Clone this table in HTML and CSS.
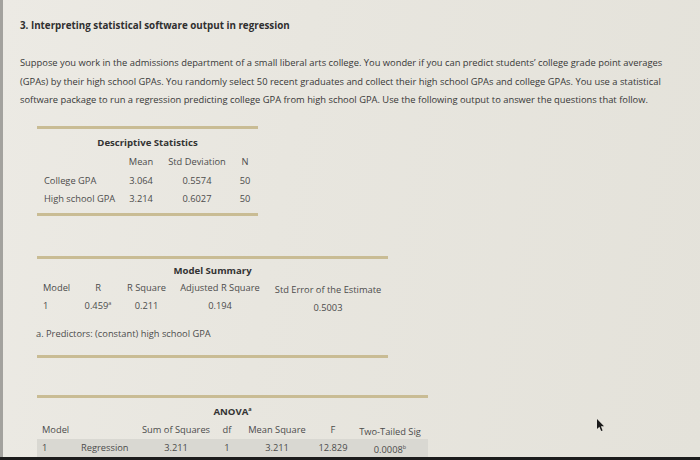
FILE: index.html
```html
<!DOCTYPE html>
<html>
<head>
<meta charset="utf-8">
<link rel="stylesheet" href="styles.css">
</head>
<body>
<div class="screen">
  <h1 class="title">3. Interpreting statistical software output in regression</h1>
  <p class="intro">Suppose you work in the admissions department of a small liberal arts college. You wonder if you can predict students’ college grade point averages (GPAs) by their high school GPAs. You randomly select 50 recent graduates and collect their high school GPAs and college GPAs. You use a statistical software package to run a regression predicting college GPA from high school GPA. Use the following output to answer the questions that follow.</p>

  <section class="output desc">
    <div class="rule"></div>
    <div class="caption">Descriptive Statistics</div>
    <table>
      <colgroup><col class="d1"><col class="d2"><col class="d3"><col class="d4"></colgroup>
      <tr><td></td><td>Mean</td><td>Std Deviation</td><td>N</td></tr>
      <tr><td class="lbl">College GPA</td><td>3.064</td><td>0.5574</td><td>50</td></tr>
      <tr><td class="lbl">High school GPA</td><td>3.214</td><td>0.6027</td><td>50</td></tr>
    </table>
    <div class="rule end"></div>
  </section>

  <section class="output summary">
    <div class="rule"></div>
    <div class="caption">Model Summary</div>
    <table>
      <colgroup><col class="m1"><col class="m2"><col class="m3"><col class="m4"><col class="m5"></colgroup>
      <tr><td class="lbl">Model</td><td>R</td><td>R Square</td><td>Adjusted R Square</td><td class="low">Std Error of the Estimate</td></tr>
      <tr><td class="lbl one">1</td><td>0.459<sup>a</sup></td><td>0.211</td><td>0.194</td><td class="low">0.5003</td></tr>
    </table>
    <p class="note">a. Predictors: (constant) high school GPA</p>
    <div class="rule"></div>
  </section>

  <section class="output anova">
    <div class="rule"></div>
    <div class="caption">ANOVA<sup>a</sup></div>
    <table>
      <colgroup><col class="a1"><col class="a2"><col class="a3"><col class="a4"><col class="a5"><col class="a6"><col class="a7"></colgroup>
      <tr><td class="lbl">Model</td><td></td><td>Sum of Squares</td><td>df</td><td>Mean Square</td><td>F</td><td class="low">Two-Tailed Sig</td></tr>
      <tr class="shade"><td class="lbl one">1</td><td class="lbl reg">Regression</td><td>3.211</td><td>1</td><td>3.211</td><td>12.829</td><td class="low">0.0008<sup>b</sup></td></tr>
    </table>
  </section>
</div>
<div class="bezel"></div>
<svg class="cursor" width="9" height="13" viewBox="0 0 9 13"><path d="M1 0 L1 10 L3.4 7.8 L5.2 12 L6.6 11.4 L4.9 7.3 L8 7.2 Z" fill="#1a1a1a"/></svg>
</body>
</html>
```
FILE: styles.css
```css
html, body {
  margin: 0;
  padding: 0;
}
body {
  width: 700px;
  height: 460px;
  overflow: hidden;
  position: relative;
  background: #e7e5de;
  font-family: "Open Sans", "Noto Sans", sans-serif;
  color: #3a3a3a;
}
.screen {
  height: 457px;
  box-sizing: border-box;
  border-left: 3px solid #a3a29e;
  padding: 19px 0 0 17px;
  overflow: hidden;
  background: linear-gradient(100deg, #eceae4 0%, #e8e6df 40%, #e4e2da 100%);
}
.title {
  margin: 0;
  font-size: 9.8px;
  line-height: 14px;
  font-weight: 700;
  color: #2f2f2f;
}
.intro {
  margin: 21px 0 0;
  width: 652px;
  font-size: 9.35px;
  line-height: 18.5px;
  color: #383838;
}
.output {
  margin-left: 17px;
  color: #4c4c4c;
  font-size: 9.3px;
}
.rule {
  height: 3px;
  background: #c9bc94;
}
.caption {
  text-align: center;
  font-weight: 700;
  font-size: 9.6px;
  color: #333;
  line-height: 18px;
}
table {
  border-collapse: collapse;
  table-layout: fixed;
}
td {
  padding: 0;
  height: 18px;
  line-height: 18px;
  text-align: center;
  white-space: nowrap;
}
td.lbl { text-align: left; padding-left: 7px; }
td.one { padding-left: 7px; }
td.low { vertical-align: bottom; line-height: 14px; }
sup { font-size: 5.5px; vertical-align: 4px; line-height: 0; }

/* descriptive */
.desc { margin-top: 16px; width: 221px; }
.desc .caption { padding: 5px 0 1.5px; }
.desc table { width: 221px; }
.desc td { height: 18.5px; line-height: 18.5px; }
.d1 { width: 83px; } .d2 { width: 42px; } .d3 { width: 70px; } .d4 { width: 26px; }
.desc .rule.end { margin-top: 4px; }

/* model summary */
.summary { margin-top: 40px; width: 351px; }
.summary .caption { padding-top: 3px; line-height: 17px; }
.summary table { width: 351px; }
.summary td.lbl { padding-left: 6px; }
.m1 { width: 38px; } .m2 { width: 46px; } .m3 { width: 51px; } .m4 { width: 96px; } .m5 { width: 120px; }
.note { margin: 10px 0 12px -1px; line-height: 18px; }

/* anova */
.anova { margin-top: 37px; width: 391px; }
.anova .caption { padding-top: 5px; }
.anova table { width: 391px; }
.anova td.lbl { padding-left: 5px; }
.anova td.reg { padding-left: 11px; }
.a1 { width: 33px; } .a2 { width: 68px; } .a3 { width: 76px; } .a4 { width: 26px; } .a5 { width: 74px; } .a6 { width: 38px; } .a7 { width: 76px; }
.shade td { background: #d9d8d2; }

.bezel {
  height: 3px;
  background: #1c1c1c;
}
.cursor {
  position: absolute;
  left: 596px;
  top: 419px;
}
```
